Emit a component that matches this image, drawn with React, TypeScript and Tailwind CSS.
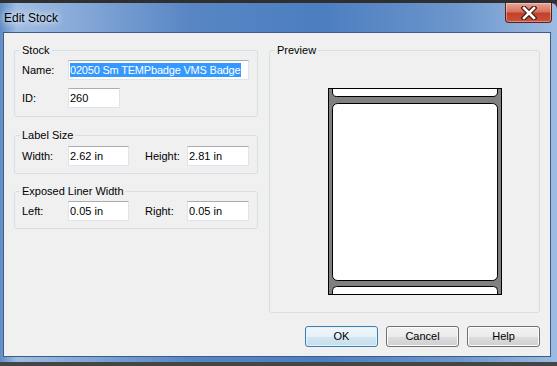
import type { ReactNode } from 'react';

// Windows 7 style "Edit Stock" dialog, drawn at 557x366.

function Group({ title, className, children }: { title: string; className?: string; children: ReactNode }) {
  return (
    <fieldset className={`rounded-[3px] border border-[#d5dfe5] ${className ?? ''}`}>
      <legend className="ml-[5px] px-[2px] text-[11px] leading-[13px] text-black">{title}</legend>
      {children}
    </fieldset>
  );
}

function TextBox({ className, children }: { className: string; children: ReactNode }) {
  return (
    <div
      className={`flex h-[20px] items-center border border-[#dfe3ea] border-t-[#abadb3] border-l-[#e2e3ea] bg-white pl-[1px] text-[11px] leading-[14px] text-black ${className}`}
    >
      {children}
    </div>
  );
}

function Button({ label, primary }: { label: string; primary?: boolean }) {
  return (
    <button
      className={
        primary
          ? 'h-[21px] w-[73px] rounded-[3px] border border-[#3c7fb1] bg-[linear-gradient(to_bottom,#f1f7fb_0%,#e6f1f8_50%,#d3e6f2_50%,#c5deee_100%)] text-[11px] text-black shadow-[inset_0_0_0_1px_#e3f3fb]'
          : 'h-[21px] w-[73px] rounded-[3px] border border-[#707070] bg-[linear-gradient(to_bottom,#f2f2f2_0%,#ebebeb_50%,#dddddd_50%,#cfcfcf_100%)] text-[11px] text-black shadow-[inset_0_0_0_1px_#fcfcfc]'
      }
    >
      {label}
    </button>
  );
}

function LabelPreview() {
  return (
    <svg width="174" height="207" viewBox="0 0 174 207" className="block">
      <rect x="0.5" y="0.5" width="173" height="206" fill="#808080" stroke="#000" />
      {/* tail of the previous label */}
      <path d="M4.5 0.5 V4 Q4.5 8.5 8.5 8.5 H165 Q169.5 8.5 169.5 4 V0.5 Z" fill="#fff" stroke="#000" />
      {/* current label */}
      <rect x="4.5" y="15.5" width="165" height="177" rx="5" fill="#fff" stroke="#000" />
      {/* head of the next label */}
      <path d="M4.5 206.5 V202.5 Q4.5 198.5 8.5 198.5 H165.5 Q169.5 198.5 169.5 202.5 V206.5 Z" fill="#fff" stroke="#000" />
      <line x1="0.5" y1="0" x2="0.5" y2="207" stroke="#000" />
      <line x1="173.5" y1="0" x2="173.5" y2="207" stroke="#000" />
      <line x1="0" y1="0.5" x2="174" y2="0.5" stroke="#000" />
      <line x1="0" y1="206.5" x2="174" y2="206.5" stroke="#000" />
    </svg>
  );
}

export default function App() {
  return (
    <div className="flex h-[366px] w-[557px] flex-col overflow-hidden bg-[#3e3e3e] font-['Liberation_Sans',Arial,sans-serif]">
      <div className="h-[3px] shrink-0 bg-[#2f2f2f]" />

      {/* window frame */}
      <div className="flex shrink-0 flex-col rounded-tr-[6px] bg-[linear-gradient(90deg,#5f8cc6_0%,#9fbde3_3%,#86a9d8_14%,#5886c4_34%,#4c7ec0_58%,#6c96cc_82%,#9dbbe2_100%)]">
        {/* title bar */}
        <div className="flex h-[29px] items-start">
          <span className="ml-[4px] mt-[8px] text-[12px] leading-[15px] text-black [text-shadow:0_0_6px_#fff,0_0_10px_rgba(255,255,255,0.8)]">
            Edit Stock
          </span>
          <div className="ml-auto mr-[5px] flex h-[20px] w-[47px] items-center justify-center rounded-b-[4px] border border-t-0 border-[#5b1f16] bg-[linear-gradient(to_bottom,#e7a597_0%,#d8735f_45%,#c1412b_55%,#c9523c_100%)] shadow-[inset_0_0_0_1px_rgba(255,255,255,0.35)]">
            <svg width="16" height="14" viewBox="0 0 16 14">
              <path d="M3 2 L13 12 M13 2 L3 12" stroke="#4a1710" strokeWidth="5" strokeLinecap="square" />
              <path d="M3 2 L13 12 M13 2 L3 12" stroke="#fff" strokeWidth="2.6" strokeLinecap="square" />
            </svg>
          </div>
        </div>

        {/* client area */}
        <div className="mb-[5px] ml-[3px] mr-[6px] flex h-[325px] flex-col border border-[#3a5d88] bg-[#f0f0f0] text-[11px] text-black">
          <div className="flex gap-[11px] px-[10px] pt-[11px]">
            <div className="flex w-[244px] flex-col">
              <Group title="Stock">
                <div className="flex flex-col gap-[8px] pl-[7px] pt-[3px] pb-[8px]">
                  <div className="flex items-center">
                    <span className="w-[46px]">Name:</span>
                    <TextBox className="w-[181px]">
                      <span className="bg-[#3399ff] pr-[1px] tracking-[-0.2px] text-white">02050 Sm TEMPbadge VMS Badge</span>
                    </TextBox>
                  </div>
                  <div className="flex items-center">
                    <span className="w-[46px]">ID:</span>
                    <TextBox className="w-[52px]">260</TextBox>
                  </div>
                </div>
              </Group>

              <Group title="Label Size" className="mt-[12px]">
                <div className="flex items-center pl-[7px] pt-[4px] pb-[7px]">
                  <span className="w-[46px]">Width:</span>
                  <TextBox className="w-[61px]">2.62 in</TextBox>
                  <span className="ml-[16px] w-[42px]">Height:</span>
                  <TextBox className="w-[62px]">2.81 in</TextBox>
                </div>
              </Group>

              <Group title="Exposed Liner Width" className="mt-[11px]">
                <div className="flex items-center pl-[7px] pt-[3px] pb-[7px]">
                  <span className="w-[46px]">Left:</span>
                  <TextBox className="w-[61px]">0.05 in</TextBox>
                  <span className="ml-[16px] w-[42px]">Right:</span>
                  <TextBox className="w-[62px]">0.05 in</TextBox>
                </div>
              </Group>
            </div>

            <Group title="Preview" className="h-[269px] w-[271px]">
              <div className="pl-[58px] pt-[31px]">
                <LabelPreview />
              </div>
            </Group>
          </div>

          <div className="mt-[13px] flex justify-end gap-[8px] pr-[10px]">
            <Button label="OK" primary />
            <Button label="Cancel" />
            <Button label="Help" />
          </div>
        </div>
      </div>

      <div className="flex-1 bg-[#454545]" />
    </div>
  );
}
